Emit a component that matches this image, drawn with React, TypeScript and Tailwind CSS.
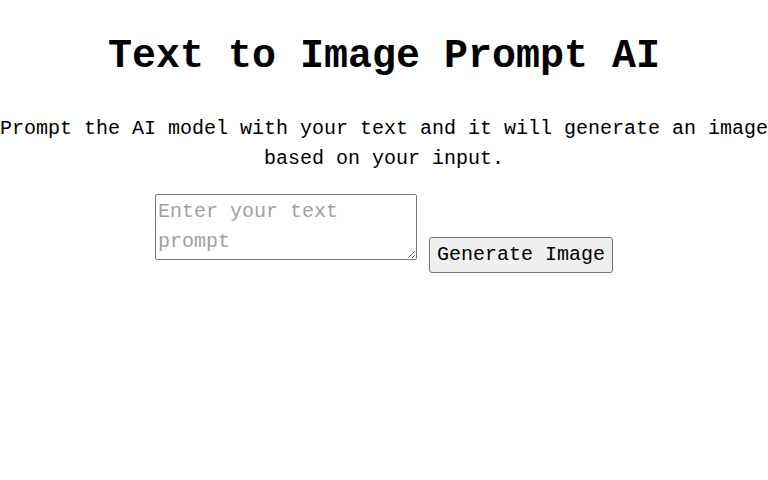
export default function App() {
  return (
    <div className="bg-white text-center font-['Liberation_Mono','Courier_New',monospace] text-[20px] leading-[30px] text-black">
      <h1 className="my-[26.8px] text-[40px] font-bold leading-[60px]">Text to Image Prompt AI</h1>
      <p className="-mx-px my-5">
        Prompt the AI model with your text and it will generate an image based on your input.
      </p>
      <div>
        <textarea
          cols={20}
          rows={2}
          placeholder="Enter your text prompt"
          className="rounded-[2px] border border-[#767676] bg-white p-[2px] align-baseline text-[20px] leading-[30px] placeholder:text-[#a0a0a0]"
        />{" "}
        <button className="rounded-[3px] border border-[#767676] bg-[#efefef] px-[7px] py-[2px] text-[20px] leading-[30px] text-black">
          Generate Image
        </button>
      </div>
    </div>
  );
}
